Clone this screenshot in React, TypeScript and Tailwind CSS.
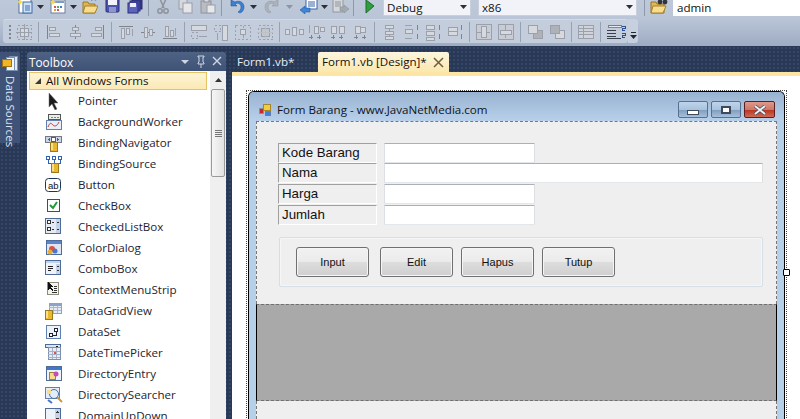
import React from "react";

const G = "#9aa1ac";
const L = "#bcc1c8";

function T2({ children, w = 22 }: { children?: React.ReactNode; w?: number }) {
  return (
    <svg width={w} height={18} viewBox={`0 0 ${w} 18`} className="shrink-0" fill="none" stroke={G} strokeWidth={1} shapeRendering="crispEdges">
      {children}
    </svg>
  );
}
const Sep2 = () => (
  <div className="w-[7px] h-[20px] flex justify-center shrink-0">
    <div className="w-px h-full bg-[#96a2b4]" />
  </div>
);
const Box = (x: number, y: number, w: number, h: number, f = "#d6d9de") => <rect x={x + 0.5} y={y + 0.5} width={w} height={h} fill={f} stroke={G} />;
const Ln = (x1: number, y1: number, x2: number, y2: number, c = G) => <line x1={x1} y1={y1} x2={x2} y2={y2} stroke={c} />;
const Dash = (x: number, y: number, w: number, h: number) => <rect x={x + 0.5} y={y + 0.5} width={w} height={h} fill="none" stroke={G} strokeDasharray="2 2" />;
const HArrows = (y: number, x = 5) => <path d={`M${x} ${y}h4M${x + 8} ${y}h4M${x + 2} ${y - 2}v4M${x + 10} ${y - 2}v4`} stroke="#7d848e" />;

const row2: (React.ReactNode | "sep")[] = [
  <>{Dash(4, 2, 14, 14)}{Box(7, 5, 8, 8)}{Ln(11, 1, 11, 17)}{Ln(3, 9, 19, 9)}</>,
  "sep",
  <>{Ln(5, 2, 5, 16, "#7d848e")}{Box(7, 4, 6, 3)}{Box(7, 10, 10, 3)}</>,
  <>{Ln(11, 2, 11, 16, "#7d848e")}{Box(8, 4, 6, 3)}{Box(6, 10, 10, 3)}</>,
  <>{Ln(17, 2, 17, 16, "#7d848e")}{Box(9, 4, 6, 3)}{Box(5, 10, 10, 3)}</>,
  "sep",
  <>{Ln(4, 3, 18, 3, "#7d848e")}{Box(6, 5, 3, 10)}{Box(11, 5, 3, 6)}{Ln(17, 6, 17, 13)}</>,
  <>{Ln(4, 9, 18, 9, "#7d848e")}{Box(7, 4, 3, 10)}{Box(12, 6, 3, 6)}</>,
  <>{Ln(4, 15, 18, 15, "#7d848e")}{Box(6, 3, 3, 10)}{Box(11, 7, 3, 6)}{Ln(16, 5, 16, 13)}</>,
  "sep",
  <>{Box(3, 2, 15, 5)}{Dash(3, 9, 6, 6)}{Ln(11, 13, 19, 13)}</>,
  <>{Box(12, 2, 5, 15)}{Dash(4, 2, 6, 6)}{Ln(7, 10, 7, 17)}</>,
  <>{Dash(3, 2, 15, 14)}{Box(8, 6, 5, 5)}{Ln(11, 3, 11, 5)}{Ln(11, 12, 11, 15)}</>,
  <>{Dash(4, 2, 14, 14)}{Box(7, 5, 8, 8, "#c4c7cc")}{Ln(3, 9, 19, 9, L)}{Ln(11, 1, 11, 17, L)}</>,
  "sep",
  <>{Box(2, 6, 4, 5)}{Box(9, 4, 4, 8)}{Box(16, 6, 4, 5)}</>,
  <>{Ln(4, 2, 4, 10)}{Box(9, 3, 4, 7)}{Box(15, 4, 4, 4)}{HArrows(14, 4)}</>,
  <>{Box(4, 3, 5, 7)}{Box(12, 3, 5, 7)}{HArrows(14, 4)}</>,
  <>{Box(6, 3, 5, 7)}{Box(11, 4, 5, 5)}{HArrows(14, 5)}</>,
  "sep",
  <>{Box(7, 2, 8, 3)}{Box(7, 8, 8, 3)}{Box(7, 13, 8, 3)}{Ln(11, 5, 11, 8)}{Ln(11, 11, 11, 13)}</>,
  <>{Ln(5, 2, 12, 2)}{Box(5, 6, 7, 4)}{Ln(5, 15, 12, 15)}{Ln(17, 2, 17, 7, "#7d848e")}{Ln(17, 11, 17, 16, "#7d848e")}</>,
  <>{Box(4, 2, 8, 4)}{Box(4, 8, 8, 4)}{Box(4, 14, 8, 3)}{Ln(17, 2, 17, 7, "#7d848e")}{Ln(17, 11, 17, 16, "#7d848e")}</>,
  <>{Box(4, 4, 9, 4)}{Box(4, 8, 9, 4)}{Ln(17, 2, 17, 7, "#7d848e")}{Ln(17, 11, 17, 16, "#7d848e")}</>,
  "sep",
  <>{Box(3, 1, 15, 15, "#c9cdd3")}{Box(8, 3, 5, 11)}{Ln(4, 9, 8, 9)}{Ln(13, 9, 17, 9)}</>,
  <>{Box(3, 1, 15, 15, "#c9cdd3")}{Box(5, 7, 11, 4)}{Ln(10, 2, 10, 7)}{Ln(10, 11, 10, 15)}</>,
  "sep",
  <>{Box(9, 7, 9, 8, "#aeb2b8")}{Box(4, 2, 9, 8, "#d7d9dc")}</>,
  <>{Box(9, 7, 9, 8, "#d7d9dc")}{Box(4, 2, 9, 8, "#aeb2b8")}</>,
  "sep",
  <>{Box(3, 2, 15, 13, "#d0d3d7")}{Ln(3, 5, 18, 5)}{Ln(3, 8, 18, 8)}{Ln(3, 11, 18, 11)}{Ln(8, 2, 8, 15)}</>,
  "sep",
];

function MiniArrow({ cls }: { cls: string }) {
  return (
    <svg width={7} height={16} viewBox="0 0 7 16" className={`shrink-0 ${cls}`}>
      <path d="M0 5h7l-3.5 4z" fill="#2a2f3a" />
    </svg>
  );
}
function Sep1({ cls }: { cls: string }) {
  return <div className={`w-px h-[16px] bg-[#8d99ab] shrink-0 ${cls}`} />;
}
function Combo({ text, cls }: { text: string; cls: string }) {
  return (
    <div className={`h-[16px] bg-[#f1f3f8] border-x border-b border-[#c9d0db] flex items-center justify-between pl-[3px] pr-[3px] shrink-0 ${cls}`}>
      <span className="text-[11.6px] leading-[14px] text-[#111]">{text}</span>
      <svg width={7} height={5} viewBox="0 0 7 5"><path d="M0 0h7l-3.5 4z" fill="#2a2f3a" /></svg>
    </div>
  );
}
function S16({ children, w = 16, cls = "" }: { children: React.ReactNode; w?: number; cls?: string }) {
  return (
    <svg width={w} height={16} viewBox={`0 0 ${w} 16`} className={`shrink-0 -mt-[2px] ${cls}`}>
      {children}
    </svg>
  );
}

const Floppy = ({ x = 1 }: { x?: number }) => (
  <>
    <rect x={x} y={1} width={13} height={13} rx={1} fill="#4a53b0" stroke="#2c2f78" />
    <rect x={x + 2} y={1} width={9} height={6} fill="#f3f4fb" />
    <rect x={x + 3} y={9} width={7} height={5} fill="#8f96c8" />
  </>
);
const Sparkle = () => <path d="M3 1l1 2 2 1-2 1-1 2-1-2-2-1 2-1z" fill="#f6d94a" />;

function Toolbar() {
  return (
    <div className="h-[46px] shrink-0 bg-[linear-gradient(#bdc8d9_0%,#bac5d7_40%,#9dabc3_100%)] flex flex-col">
      <div className="h-[19px] flex items-start pl-[17px] overflow-hidden">
        <S16>
          <rect x={2} y={1} width={12} height={14} fill="#fff" stroke="#5a6f90" />
          <rect x={6} y={4} width={9} height={11} fill="#cfe0f5" stroke="#3f6fb0" />
          <path d="M8 8h5M8 10h5M8 12h5" stroke="#3f6fb0" />
          <Sparkle />
        </S16>
        <MiniArrow cls="ml-[4px]" />
        <S16 cls="ml-[6px]">
          <rect x={1} y={2} width={14} height={13} fill="#fff" stroke="#6b7f9e" />
          <rect x={2} y={3} width={12} height={2} fill="#7c9ccb" />
          <rect x={4} y={8} width={2} height={2} fill="#d9534f" /><rect x={7} y={8} width={2} height={2} fill="#4caf50" /><rect x={10} y={8} width={2} height={2} fill="#3f7fd0" />
          <rect x={4} y={11} width={2} height={2} fill="#e0a030" /><rect x={7} y={11} width={2} height={2} fill="#d9534f" />
          <Sparkle />
        </S16>
        <MiniArrow cls="ml-[4px]" />
        <S16 cls="ml-[5px]">
          <path d="M1 4h5l1 2h6v9H1z" fill="#e0b54f" stroke="#9b7a2c" />
          <path d="M3 8h13l-3 7H1z" fill="#f6dc8b" stroke="#a5812f" />
          <path d="M9 3c2-2 4-2 5 0" stroke="#5f8fbf" fill="none" />
        </S16>
        <S16 cls="ml-[7px]"><Floppy /></S16>
        <S16 cls="ml-[6px]">
          <rect x={5} y={1} width={10} height={10} fill="#343a8a" stroke="#262a6e" />
          <rect x={3} y={3} width={10} height={10} fill="#4a53b0" stroke="#2c2f78" />
          <rect x={1} y={5} width={10} height={10} fill="#5a63bd" stroke="#2c2f78" />
          <rect x={3} y={5} width={6} height={4} fill="#eef" />
        </S16>
        <Sep1 cls="ml-[5px]" />
        <S16 cls="ml-[6px]">
          <g fill="none" stroke="#8e939a" strokeWidth={1.5}>
            <path d="M5 1l4 9M11 1L7 10" />
            <circle cx={5} cy={13} r={2.2} />
            <circle cx={11} cy={13} r={2.2} />
          </g>
        </S16>
        <S16 cls="ml-[6px]">
          <rect x={2} y={1} width={8} height={10} fill="#d5d8dc" stroke="#9a9ea5" />
          <rect x={6} y={5} width={9} height={10} fill="#e4e6e9" stroke="#9a9ea5" />
        </S16>
        <S16 cls="ml-[7px]">
          <rect x={1} y={3} width={10} height={12} fill="#b9bcc2" stroke="#8f939a" />
          <rect x={4} y={1} width={5} height={3} fill="#d8dade" stroke="#8f939a" />
          <rect x={7} y={7} width={8} height={8} fill="#e6e8ea" stroke="#9a9ea5" />
        </S16>
        <Sep1 cls="ml-[5px]" />
        <S16 cls="ml-[7px]">
          <path d="M2 2v6h6L6 6c3-2 6 0 6 3 0 2-1 4-3 5l2 1c3-1 4-4 4-6 0-5-5-7-9-5z" fill="#3d7fd0" stroke="#1f4f96" strokeWidth={0.5} />
        </S16>
        <MiniArrow cls="ml-[5px]" />
        <S16 cls="ml-[7px]">
          <path d="M14 2v6H8l2-2c-3-2-6 0-6 3 0 2 1 4 3 5l-2 1c-3-1-4-4-4-6 0-5 5-7 9-5z" fill="#aeb3ba" stroke="#8f949b" strokeWidth={0.5} />
        </S16>
        <S16 w={7} cls="ml-[6px]"><path d="M0 7h7l-3.5 4z" fill="#8d95a3" /></S16>
        <S16 w={18} cls="ml-[7px]">
          <rect x={6} y={1} width={11} height={10} fill="#fff" stroke="#3a62a8" />
          <path d="M8 4h7M8 6h7M8 8h7" stroke="#3a62a8" />
          <path d="M0 12l5-4v2h5v4H5v2z" fill="#3d86d8" stroke="#1f4f96" strokeWidth={0.5} />
        </S16>
        <MiniArrow cls="ml-[3px]" />
        <S16 w={18} cls="ml-[4px]">
          <rect x={1} y={1} width={10} height={13} fill="#d4d7db" stroke="#92979e" />
          <path d="M3 4h6M3 6h6M3 8h6" stroke="#92979e" />
          <path d="M17 11l-5-4v2H8v4h4v2z" fill="#a4a9b0" stroke="#878c93" strokeWidth={0.5} />
        </S16>
        <Sep1 cls="ml-[3px]" />
        <S16 cls="ml-[8px]"><path d="M4 2l8 6-8 7z" fill="#2f9e3f" stroke="#1d6e2b" /></S16>
        <Combo text="Debug" cls="ml-[5px] w-[88px]" />
        <Combo text="x86" cls="ml-[7px] w-[159px]" />
        <Sep1 cls="ml-[7px]" />
        <S16 w={18} cls="ml-[5px]">
          <path d="M1 4h5l1 2h7v9H1z" fill="#e3b850" stroke="#94732a" />
          <path d="M3 8h13l-3 7H1z" fill="#f6dc8b" stroke="#a5812f" />
          <circle cx={10} cy={4} r={2.4} fill="#30343c" /><circle cx={15} cy={4} r={2.4} fill="#30343c" />
        </S16>
        <div className="ml-[5px] flex-1 h-[16px] bg-white pl-[4px] flex items-center">
          <span className="text-[11.6px] leading-[14px] text-[#111]">admin</span>
        </div>
      </div>
      <div className="flex h-[25px] items-start">
        <div className="ml-[3px] h-[24px] w-[625px] rounded-[3px] bg-[#c3cddc] border-t border-[#d2dae6] flex items-center pl-[3px]">
          <svg width={7} height={18} viewBox="0 0 7 18" className="shrink-0">
            <path d="M3 2h2v2H3zM3 6h2v2H3zM3 10h2v2H3zM3 14h2v2H3z" fill="#7a8699" />
          </svg>
          {row2.map((c, i) => (c === "sep" ? <Sep2 key={i} /> : <T2 key={i}>{c}</T2>))}
          <svg width={23} height={18} viewBox="0 0 23 18" className="shrink-0" shapeRendering="crispEdges">
            <rect x={4} y={2.5} width={13} height={2} fill="#e6e9ee" stroke="#3c4657" strokeWidth={0.6} />
            <path d="M3 7h9M3 10h9M3 13h9" stroke="#39414f" />
            <rect x={3} y={15} width={14} height={1} fill="#39414f" />
            <path d="M18 3h3v2h-3v2h3M18 10h3v2h-3v2h3" stroke="#2d4f95" fill="none" />
          </svg>
        </div>
        <div className="w-[10px] h-[24px] rounded-r-[3px] bg-[#c6d0de] flex flex-col items-center justify-end pb-[4px] gap-[2px]">
          <div className="w-[5px] h-px bg-[#22262e]" />
          <svg width={7} height={4} viewBox="0 0 7 4"><path d="M0 0h7L3.5 4z" fill="#22262e" /></svg>
        </div>
      </div>
    </div>
  );
}

function TB({ children }: { children: React.ReactNode }) {
  return (
    <svg width={18} height={18} viewBox="0 0 18 18" shapeRendering="crispEdges" className="shrink-0">
      {children}
    </svg>
  );
}
const Wn = ({ f = "#dde6f3" }: { f?: string }) => <rect x={1.5} y={1.5} width={15} height={14} fill={f} stroke="#4d6c9c" />;
const Cyl = ({ x = 3, y = 8 }: { x?: number; y?: number }) => (
  <>
    <rect x={x} y={y} width={7} height={9} fill="#e9b82f" stroke="#9a7a1f" />
    <rect x={x + 1} y={y + 1} width={2} height={7} fill="#f7e08a" />
  </>
);

const tools: [string, React.ReactNode][] = [
  ["Pointer", <path d="M4 1v14l3-3 3 6 2-1-3-6h4z" fill="#1c1c1c" stroke="#777" strokeWidth={0.5} shapeRendering="auto" />],
  ["BackgroundWorker", <><rect x={3.5} y={1.5} width={12} height={5} fill="#e7efe6" stroke="#555" /><path d="M6 4h2M9 4h2M12 4h2" stroke="#3fb53f" /><rect x={1.5} y={7.5} width={15} height={9} fill="#e8eff9" stroke="#5f80b0" /><path d="M3 14c2-5 3-4 5-2s4 1 6-3" stroke="#c0392b" fill="none" shapeRendering="auto" /></>],
  ["BindingNavigator", <><rect x={0.5} y={2.5} width={16} height={6} fill="#c9d6e8" stroke="#778" /><path d="M3 5.5l2-2v4zM14 5.5l-2-2v4z" fill="#2f62b5" /><rect x={6.5} y={3.5} width={4} height={4} fill="#fff" stroke="#2f62b5" /><Cyl x={5} y={8} /></>],
  ["BindingSource", <><rect x={1.5} y={1.5} width={3} height={3} fill="#fff" stroke="#2f62b5" /><rect x={7.5} y={1.5} width={3} height={3} fill="#fff" stroke="#2f62b5" /><rect x={13.5} y={1.5} width={3} height={3} fill="#fff" stroke="#2f62b5" /><path d="M3 5v3h12V5M9 5v3" stroke="#2f62b5" fill="none" /><Cyl x={6} y={8} /></>],
  ["Button", <><rect x={0.5} y={2.5} width={15} height={13} rx={3} fill="#fff" stroke="#1f3558" shapeRendering="auto" /><text x={3} y={12.5} fontSize={9.5} fontFamily="Liberation Sans" fill="#111">ab</text></>],
  ["CheckBox", <><rect x={2.5} y={2.5} width={12} height={12} fill="#fff" stroke="#3a4f6e" /><path d="M5 8l3 3 4-6" stroke="#1d9a3b" strokeWidth={2} fill="none" shapeRendering="auto" /></>],
  ["CheckedListBox", <><rect x={0.5} y={0.5} width={15} height={15} fill="#e4ebf5" stroke="#4d6c9c" /><rect x={2.5} y={2.5} width={3} height={3} fill="#fff" stroke="#333" /><rect x={2.5} y={9.5} width={3} height={3} fill="#fff" stroke="#333" /><path d="M7 4h2M7 11h2" stroke="#333" /><rect x={11} y={1} width={4} height={14} fill="#c5d3e8" /><path d="M12 5l1-2 1 2zM12 11l1 2 1-2z" fill="#333" /></>],
  ["ColorDialog", <><Wn /><rect x={2} y={2} width={14} height={3} fill="#5b86c8" /><circle cx={7} cy={10} r={3} fill="#e0503f" shapeRendering="auto" /><circle cx={5} cy={13} r={2.5} fill="#e9b030" shapeRendering="auto" /><circle cx={10} cy={12} r={2.5} fill="#4a77cc" shapeRendering="auto" /></>],
  ["ComboBox", <><rect x={0.5} y={0.5} width={15} height={14} fill="#eef3fa" stroke="#4d6c9c" /><rect x={1} y={1} width={14} height={2} fill="#c5d3e8" /><path d="M3 6h5M3 8h5M3 10h3" stroke="#222" /><rect x={11} y={4} width={4} height={10} fill="#c5d3e8" /><path d="M12 7l1-2 1 2zM12 10l1 2 1-2z" fill="#333" /></>],
  ["ContextMenuStrip", <><rect x={2.5} y={1.5} width={11} height={12} fill="#f4f4ee" stroke="#8c8c7c" /><path d="M3 1v8l2-2 2 3 1-1-2-3h3z" fill="#111" /><path d="M9 5h3M9 7h3M9 9h3M7 11h5" stroke="#333" /></>],
  ["DataGridView", <><rect x={4.5} y={1.5} width={12} height={10} fill="#e6ecf5" stroke="#8fa2bf" /><path d="M4 5h12M4 8h12M8 2v9M12 2v9" stroke="#aab9cf" /><rect x={5} y={2} width={11} height={2} fill="#8ea4c4" /><Cyl x={0} y={8} /></>],
  ["DataSet", <><rect x={1.5} y={2.5} width={14} height={13} fill="#edf3fb" stroke="#5f80b0" /><rect x={4.5} y={10.5} width={3} height={3} fill="#fff" stroke="#223" /><rect x={9.5} y={5.5} width={3} height={3} fill="#fff" stroke="#223" /><path d="M8 12h3V9" stroke="#223" fill="none" /></>],
  ["DateTimePicker", <><rect x={0.5} y={0.5} width={15} height={3} fill="#dbe5f2" stroke="#4d6c9c" /><path d="M11 2l1 1 1-1" stroke="#222" /><rect x={3.5} y={3.5} width={12} height={12} fill="#e8edf5" stroke="#7c8fae" /><path d="M3 7h12M3 10h12M3 13h12M7 4v11M11 4v11" stroke="#a5b2c7" /><rect x={9} y={8} width={2} height={2} fill="#d9534f" /></>],
  ["DirectoryEntry", <><Wn f="#eef3fb" /><rect x={2} y={2} width={14} height={3} fill="#3f78cc" /><path d="M4 7h6v7H4z" fill="#f6dc8b" stroke="#a5812f" /><circle cx={11} cy={9} r={2.5} fill="#c24fb8" shapeRendering="auto" /></>],
  ["DirectorySearcher", <><rect x={0.5} y={1.5} width={14} height={11} fill="#e6edf7" stroke="#5f80b0" /><circle cx={9} cy={8} r={4.5} fill="#dfeefb" stroke="#4d6c9c" shapeRendering="auto" /><path d="M12 11l5 5" stroke="#c89a3a" strokeWidth={2} shapeRendering="auto" /><path d="M3 14l4 3" stroke="#3f78cc" strokeWidth={2} shapeRendering="auto" /><path d="M2 4h4v4H2z" fill="#f6dc8b" /></>],
  ["DomainUpDown", <><rect x={0.5} y={1.5} width={15} height={15} fill="#eef3fa" stroke="#4d6c9c" /><rect x={10} y={2} width={5} height={14} fill="#c5d3e8" /><path d="M11 6l1.5-2 1.5 2zM11 11l1.5 2 1.5-2z" fill="#333" /></>],
];

function Toolbox() {
  return (
    <div className="w-[199px] ml-[7px] mt-[6px] flex flex-col shrink-0 h-[373px]">
      <div className="h-[19px] rounded-t-[3px] bg-[linear-gradient(#4e6284,#3f5378)] flex items-center pl-[2px] pr-[2px] shrink-0">
        <span className="text-[11.8px] leading-[16px] text-[#fff] flex-1">Toolbox</span>
        <svg width={46} height={14} viewBox="0 0 46 14" fill="none">
          <path d="M3 5h8l-4 4z" fill="#ced6e4" />
          <path d="M20 1h6v1h-1v5l1 1v1h-6V8l1-1V2h-1zM23 9v4" stroke="#ced6e4" />
          <path d="M35 2l8 8M43 2l-8 8" stroke="#ced6e4" strokeWidth={1.4} />
        </svg>
      </div>
      <div className="flex flex-1 bg-white min-h-0">
        <div className="w-[183px] overflow-hidden">
          <div className="mt-px ml-[2px] h-[18px] w-[178px] border border-[#e5c365] bg-[linear-gradient(#fdf4d7,#fbe9b4)] flex items-center pl-[4px] gap-[3px]">
            <svg width={9} height={9} viewBox="0 0 9 9"><path d="M7 1v6H1z" fill="#3a3a3a" /></svg>
            <span className="text-[11.6px] leading-[14px] text-[#111]">All Windows Forms</span>
          </div>
          {tools.map(([name, ic]) => (
            <div key={name} className="h-[21px] flex items-center pl-[18px]">
              <TB>{ic}</TB>
              <span className="ml-[15px] text-[11.6px] leading-[14px] text-[#1e2430] whitespace-nowrap">{name}</span>
            </div>
          ))}
        </div>
        <div className="w-[16px] bg-[#efefef] flex flex-col items-center shrink-0">
          <div className="h-[18px] w-full flex items-center justify-center">
            <svg width={7} height={4} viewBox="0 0 7 4"><path d="M3.5 0L7 4H0z" fill="#333" /></svg>
          </div>
          <div className="w-[14px] h-[88px] rounded-[2px] border border-[#9a9a9a] bg-[linear-gradient(90deg,#f6f6f6,#e2e2e2)] flex flex-col items-center justify-center gap-px">
            <div className="w-[7px] h-px bg-[#777]" />
            <div className="w-[7px] h-px bg-[#777]" />
            <div className="w-[7px] h-px bg-[#777]" />
            <div className="w-[7px] h-px bg-[#777]" />
          </div>
        </div>
      </div>
    </div>
  );
}

const LB = { fontFamily: '"Liberation Sans",sans-serif' };

function Field({ label, wide, first }: { label: string; wide?: boolean; first?: boolean }) {
  return (
    <div className={`flex h-[20px] ${first ? "" : "mb-px"}`}>
      <div style={LB} className="w-[99px] h-[20px] border border-t-[#a0a0a0] border-l-[#a0a0a0] border-b-white border-r-white pl-[3px] flex items-center text-[13.3px] leading-none text-[#111]">
        {label}
      </div>
      <div className={`ml-[7px] h-[20px] rounded-[1px] bg-white border border-t-[#abb0b8] border-l-[#dcdfe3] border-r-[#dcdfe3] border-b-[#e3e6ea] ${wide ? "w-[379px]" : "w-[151px]"}`} />
    </div>
  );
}

function Btn({ text, cls = "" }: { text: string; cls?: string }) {
  return (
    <div style={LB} className={`w-[73px] h-[30px] rounded-[3px] border border-[#707070] bg-[linear-gradient(#f2f2f2_0%,#ebebeb_48%,#dddddd_50%,#cfcfcf_100%)] shadow-[inset_0_0_0_1px_#f5f5f5] flex items-center justify-center text-[11px] leading-none text-[#111] ${cls}`}>
      {text}
    </div>
  );
}

function Designer() {
  return (
    <div className="flex-1 h-full bg-white pl-[14px] pt-[14px] overflow-hidden">
      <div className="relative w-[541px] h-[400px] border border-dotted border-[#444] px-px">
        <div className="h-full rounded-t-[6px] border border-b-0 border-black bg-[#b7d0ea] flex flex-col">
          <div className="h-[29px] shrink-0 rounded-t-[5px] bg-[linear-gradient(#98b3d1,#b8d0ea)] flex items-center pt-[7px] pl-[10px] pr-[9px]">
            <svg width={14} height={14} viewBox="0 0 14 14" className="shrink-0" shapeRendering="crispEdges">
              <rect x={0.5} y={5.5} width={4} height={5} fill="#c62a22" stroke="#8a8f99" />
              <rect x={4.5} y={1.5} width={7} height={6} fill="#f3cd3e" stroke="#a4862b" />
              <rect x={6.5} y={8.5} width={5} height={4} fill="#3f7fd8" stroke="#5f80b0" />
            </svg>
            <span className="ml-[4px] flex-1 text-[11.6px] leading-[14px] text-[#101418]">Form Barang - www.JavaNetMedia.com</span>
            <div className="flex gap-[3px] mt-[-1px]">
              <div className="w-[30px] h-[17px] rounded-[2px] border border-[#56708f] bg-[linear-gradient(#bfd4ea_0%,#a9c3de_50%,#7e9cbc_52%,#a5c0dc_100%)] flex items-end justify-center pb-[2px]">
                <div className="w-[10px] h-[3px] bg-white border border-[#3e4a5b] box-content" />
              </div>
              <div className="w-[30px] h-[17px] rounded-[2px] border border-[#56708f] bg-[linear-gradient(#bfd4ea_0%,#a9c3de_50%,#7e9cbc_52%,#a5c0dc_100%)] flex items-center justify-center">
                <div className="w-[10px] h-[8px] bg-white border-2 border-[#3e4a5b]" />
              </div>
              <div className="w-[31px] h-[17px] rounded-[2px] border border-[#5e1f24] bg-[linear-gradient(#dd9a8b_0%,#cf7767_50%,#b8341f_52%,#cf6a52_100%)] flex items-center justify-center">
                <svg width={14} height={10} viewBox="0 0 14 10">
                  <path d="M2 1l10 8M12 1L2 9" stroke="#3e4a5b" strokeWidth={3.4} />
                  <path d="M2 1l10 8M12 1L2 9" stroke="#eef1f5" strokeWidth={2} />
                </svg>
              </div>
            </div>
          </div>
          <div className="flex-1 px-[7px] min-h-0">
            <div className="h-full bg-[#efefef] border border-dashed border-[#777] border-b-0 flex flex-col">
              <div className="pl-[21px] pt-[21px]">
                <Field label="Kode Barang" first />
                <Field label="Nama" wide />
                <Field label="Harga" />
                <Field label="Jumlah" />
              </div>
              <div className="ml-[22px] mt-[11px] w-[484px] h-[50px] rounded-[2px] border border-[#d6dfe7] shadow-[inset_0_0_0_1px_#f6f6f6] flex items-center pl-[16px]">
                <Btn text="Input" />
                <Btn text="Edit" cls="ml-[11px]" />
                <Btn text="Hapus" cls="ml-[8px]" />
                <Btn text="Tutup" cls="ml-[8px]" />
              </div>
              <div className="-mx-px mt-[17px] h-[97px] shrink-0 bg-[#a9a9a9] border-y border-dashed border-y-[#6f6f6f] border-x border-x-black [border-left-style:solid] [border-right-style:solid]" />
            </div>
          </div>
        </div>
        <div className="absolute right-[-4px] top-[178px] w-[7px] h-[7px] bg-white border border-black rounded-[1px]" />
      </div>
    </div>
  );
}

export default function App() {
  return (
    <div className="w-[800px] h-[419px] overflow-hidden flex flex-col" style={{ fontFamily: '"Open Sans","Noto Sans",sans-serif' }}>
      <Toolbar />
      <div className="flex-1 flex min-h-0 bg-[#293955] bg-[radial-gradient(#34466a_1px,transparent_1px)] bg-[length:4px_4px]">
        <div className="w-[20px] mt-[6px] h-[91px] bg-[#3f5379] shrink-0 rounded-tr-[2px] flex flex-col items-center pt-[3px]">
          <svg width={18} height={18} viewBox="0 0 18 18" className="shrink-0" shapeRendering="crispEdges">
            <rect x={8.5} y={1.5} width={8} height={14} fill="#dfe8f5" stroke="#7b8fae" />
            <rect x={5.5} y={2.5} width={8} height={13} fill="#f2f5fa" stroke="#7b8fae" />
            <rect x={1.5} y={4.5} width={9} height={7} fill="#f0b429" stroke="#a07415" />
          </svg>
          <span className="mt-[3px] [writing-mode:vertical-rl] text-[11.6px] leading-[14px] text-[#dbe3ef] whitespace-nowrap">Data Sources</span>
        </div>
        <Toolbox />
        <div className="flex-1 ml-[6px] mt-[6px] flex flex-col min-w-0">
          <div className="h-[20px] flex items-end shrink-0">
            <div className="w-[86px] h-[20px] pl-[5px] flex items-center text-[11.6px] leading-[14px] text-[#e8edf5]">Form1.vb*</div>
            <div className="w-[131px] h-[20px] rounded-t-[2px] bg-[linear-gradient(#fdf6de,#fbe8b0)] pl-[4px] pr-[5px] flex items-center text-[11.6px] leading-[14px] text-[#111]">
              <span className="flex-1 whitespace-nowrap">Form1.vb [Design]*</span>
              <svg width={11} height={11} viewBox="0 0 11 11"><path d="M1 1l9 9M10 1l-9 9" stroke="#6d5f3a" strokeWidth={1.5} /></svg>
            </div>
          </div>
          <div className="h-[4px] bg-[#fde5a4] shrink-0" />
          <div className="flex-1 min-h-0"><Designer /></div>
        </div>
      </div>
    </div>
  );
}
